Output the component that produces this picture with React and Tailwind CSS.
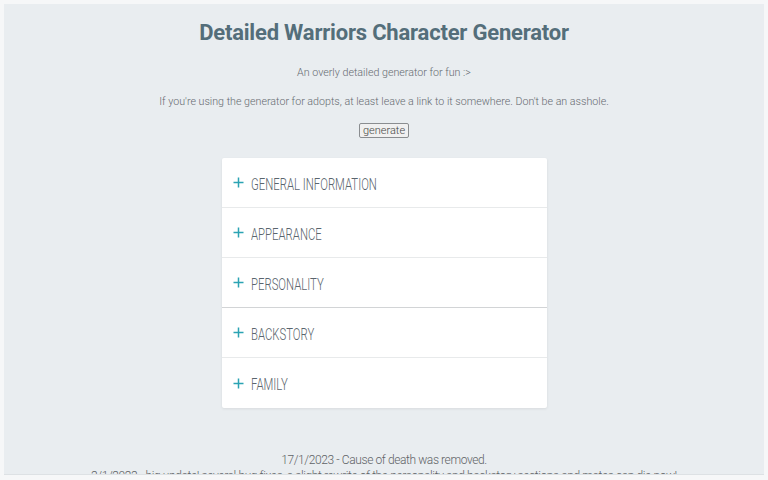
import React from 'react'

const sections = ['GENERAL INFORMATION', 'APPEARANCE', 'PERSONALITY', 'BACKSTORY', 'FAMILY']

function Plus() {
  return (
    <svg width="11" height="11" viewBox="0 0 11 11" className="shrink-0">
      <path d="M5.5 0.5v10M0.5 5.5h10" stroke="#2ba3b3" strokeWidth="1.5" />
    </svg>
  )
}

export default function App() {
  return (
    <div className="h-[480px] w-[768px] overflow-hidden bg-[#f6f7f8] pt-[4px] px-[4px]">
      <div className="h-[471px] overflow-hidden bg-[#e9edf0] border-b border-[#dde1e4] flex flex-col items-center" style={{ fontFamily: 'Roboto, sans-serif' }}>
        <h1 className="mt-[14px] text-[22px] leading-[30px] font-bold text-[#546e7a] tracking-[-0.2px]">
          Detailed Warriors Character Generator
        </h1>
        <p className="mt-[18px] text-[10.7px] leading-[14px] font-light text-[#666b70]">
          An overly detailed generator for fun :&gt;
        </p>
        <p className="mt-[15px] text-[10.7px] leading-[14px] font-light text-[#666b70]">
          If you're using the generator for adopts, at least leave a link to it somewhere. Don't be an asshole.
        </p>
        <button className="mt-[14px] h-[17px] px-[3px] border border-[#8a8d90] rounded-[2px] bg-[#f0f0f0] text-[11px] leading-[13px] font-light text-[#444]">
          generate
        </button>
        <div className="mt-[20px] w-[325px] bg-white rounded-[2px] shadow-[0_1px_3px_rgba(0,0,0,0.08)]">
          {sections.map((s, i) => (
            <div
              key={s}
              className={
                'h-[50px] flex items-center gap-[7px] pl-[11px] ' +
                (i === 2 ? 'border-b border-[#d2d4d6]' : i < 4 ? 'border-b border-[#e8eaeb]' : '')
              }
            >
              <Plus />
              <span className="inline-block origin-left scale-x-[0.667] whitespace-nowrap text-[17px] leading-[20px] font-light text-[#5a656d] mt-[2px]">
                {s}
              </span>
            </div>
          ))}
        </div>
        <div className="mt-[44px] text-center text-[12px] leading-[16px] font-light text-[#5f6366]">
          <p className="tracking-[-0.4px]">17/1/2023 - Cause of death was removed.</p>
          <p className="tracking-[-0.4px]">3/1/2023 - big update! several bug fixes, a slight rewrite of the personality and backstory sections and mates can die now!</p>
        </div>
      </div>
    </div>
  )
}
